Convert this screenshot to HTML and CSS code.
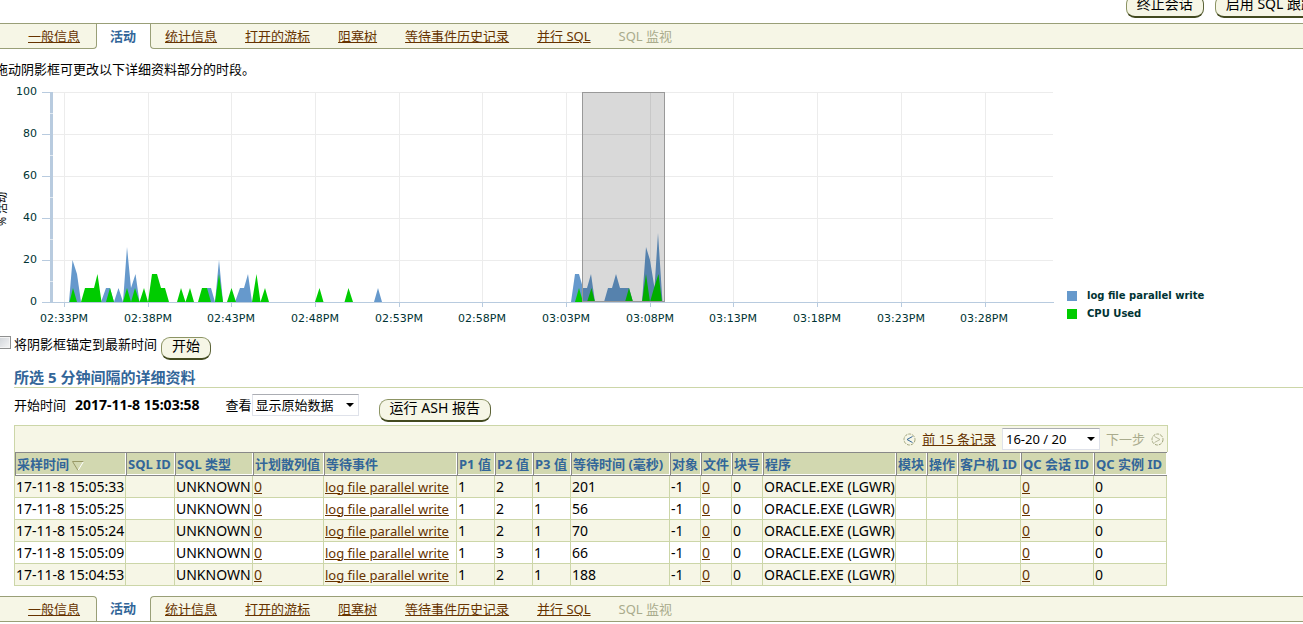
FILE: index.html
```
<!DOCTYPE html>
<html lang="zh-CN">
<head>
  <meta charset="UTF-8" />
  <meta name="viewport" content="width=device-width, initial-scale=1.0"/>
  <title>会话详细资料</title>
  <link rel="stylesheet" href="styles.css">
</head>
<body>
  <div class="toolbar">
    <button class="btn">终止会话</button>
    <button class="btn">启用 SQL 跟踪</button>
  </div>

  <nav class="tabs tabs-top">
    <div class="tab-group before"><a href="#">一般信息</a></div>
    <span class="tab-active">活动</span>
    <div class="tab-group after">
      <a href="#">统计信息</a>
      <a href="#">打开的游标</a>
      <a href="#">阻塞树</a>
      <a href="#">等待事件历史记录</a>
      <a href="#">并行 SQL</a>
      <span class="disabled">SQL 监视</span>
    </div>
  </nav>

  <p class="hint">拖动阴影框可更改以下详细资料部分的时段。</p>

  <div class="chart-row">
    <svg class="chart" width="1056" height="244" viewBox="0 84 1056 244">
      <!-- grid -->
      <path class="grid" d="M53 92.5H1053M53 134.5H1053M53 176.5H1053M53 218.5H1053M53 260.5H1053M64.5 92V302M148.5 92V302M231.5 92V302M315.5 92V302M399.5 92V302M482.5 92V302M566.5 92V302M650.5 92V302M733.5 92V302M817.5 92V302M901.5 92V302M985.5 92V302"/>
      <!-- log file parallel write -->
      <path class="area-log" d="M69 302L72.500 260L77 274L81 302ZM101 302L106 288H110L114 302L118.500 288L123 302L127 247L131 288L135.500 274L139.500 302ZM203 302L207 288H211L215 302L219 260L223 302ZM235 302L240 288H244L248 274L252 302ZM374 302L378 288L382 302ZM571 302L575 274H579L583 288H587L591 274L595 302ZM604 302L608 288H612L616 274L620 288H629L633 302ZM642 302L646 247L650 260L654.500 288L658 233L662.500 302Z"/>
      <!-- CPU used -->
      <path class="area-cpu" d="M69.500 302L73 288L77 302ZM81 302L85 288H94L97.500 274L101.500 302ZM106 302L110 288L114 302ZM123 302L127 288L131 302L135 288L139.500 302L144 288L148 302L152 274H157L161 288H165L169 302ZM177 302L181 288L185.500 302L190 288L194 302ZM198 302L202 288H207L211 302ZM215 302L219 274L223 302ZM227 302L231.500 288L236 302ZM252 302L256.500 274L260.500 302L265 288L269 302ZM315 302L319.500 288L323.500 302ZM344.500 302L348.500 288L353 302ZM575 302L579 288L583 302ZM587 302L591.500 288L595 302ZM625 302L629 288L633 302ZM642 302L646 274L650 302L654 288L658.500 274L662 302Z"/>
      <rect class="shade" x="582.500" y="92.500" width="82" height="209"/>
      <!-- axes -->
      <path class="axis" d="M42 92.500H50M42 134.500H50M42 176.500H50M42 218.500H50M42 260.500H50M42 302.500H1054M64.500 302V307M148.500 302V307M231.500 302V307M315.500 302V307M399.500 302V307M482.500 302V307M566.500 302V307M650.500 302V307M733.500 302V307M817.500 302V307M901.500 302V307M985.500 302V307"/>
      <path class="axis-bar" d="M51.500 92V303"/>
      <path class="axis-gap" d="M50 113.500H53M50 155.500H53M50 197.500H53M50 239.500H53M50 281.500H53"/>
      <g class="y-labels">
        <text x="37" y="95">100</text>
        <text x="37" y="137">80</text>
        <text x="37" y="179">60</text>
        <text x="37" y="221">40</text>
        <text x="37" y="263">20</text>
        <text x="37" y="305">0</text>
      </g>
      <g class="x-labels">
        <text x="64" y="322">02:33PM</text>
        <text x="148" y="322">02:38PM</text>
        <text x="231" y="322">02:43PM</text>
        <text x="315" y="322">02:48PM</text>
        <text x="399" y="322">02:53PM</text>
        <text x="482" y="322">02:58PM</text>
        <text x="566" y="322">03:03PM</text>
        <text x="650" y="322">03:08PM</text>
        <text x="733" y="322">03:13PM</text>
        <text x="817" y="322">03:18PM</text>
        <text x="901" y="322">03:23PM</text>
        <text x="984" y="322">03:28PM</text>
      </g>
      <text class="y-title" transform="translate(6 209) rotate(-90)">% 活动</text>
    </svg>
    <ul class="legend">
      <li><i class="swatch log"></i>log file parallel write</li>
      <li><i class="swatch cpu"></i>CPU Used</li>
    </ul>
  </div>

  <div class="anchor-row">
    <input type="checkbox" id="anchor">
    <label for="anchor">将阴影框锚定到最新时间</label>
    <button class="btn">开始</button>
  </div>

  <div class="details">
    <h2>所选 5 分钟间隔的详细资料</h2>
    <div class="filter-row">
      <span>开始时间</span>
      <strong>2017-11-8 15:03:58</strong>
      <label for="view">查看</label>
      <select id="view" class="view-select"><option>显示原始数据</option></select>
      <button class="btn">运行 ASH 报告</button>
    </div>

    <div class="table-wrap">
      <div class="pager">
        <svg width="13" height="13" viewBox="0 0 13 13"><circle class="ring" cx="6.500" cy="6.500" r="5.500"/><path class="arrow" d="M9.500 3.500L4 6.500L9.500 9.500"/></svg>
        <a href="#">前 15 条记录</a>
        <select class="page-select" aria-label="记录范围"><option>16-20 / 20</option></select>
        <span class="disabled">下一步</span>
        <svg width="13" height="13" viewBox="0 0 13 13"><circle class="ring" cx="6.500" cy="6.500" r="5.500"/><path class="arrow off" d="M3.500 3.500L9 6.500L3.500 9.500"/></svg>
      </div>
      <table class="samples">
        <colgroup>
          <col class="c-time"><col class="c-sqlid"><col class="c-type"><col class="c-hash"><col class="c-event">
          <col class="c-p"><col class="c-p"><col class="c-p"><col class="c-wait"><col class="c-s"><col class="c-s"><col class="c-s">
          <col class="c-prog"><col class="c-s"><col class="c-s"><col class="c-client"><col class="c-qc"><col class="c-qc">
        </colgroup>
        <thead>
          <tr>
            <th>采样时间<svg class="sort" width="12" height="10" viewBox="0 0 12 10"><path d="M11.500 .5L6 9.500" stroke="#fff"/><path d="M6 9.500L.5 .5H11.500" stroke="#999966"/></svg></th>
            <th>SQL ID</th><th>SQL 类型</th><th>计划散列值</th><th>等待事件</th>
            <th>P1 值</th><th>P2 值</th><th>P3 值</th><th>等待时间 (毫秒)</th><th>对象</th><th>文件</th><th>块号</th>
            <th>程序</th><th>模块</th><th>操作</th><th>客户机 ID</th><th>QC 会话 ID</th><th>QC 实例 ID</th>
          </tr>
        </thead>
        <tbody>
          <tr>
            <td>17-11-8 15:05:33</td><td></td><td>UNKNOWN</td><td><a href="#">0</a></td><td class="event"><a href="#">log file parallel write</a></td>
            <td>1</td><td>2</td><td>1</td><td>201</td><td>-1</td><td><a href="#">0</a></td><td>0</td>
            <td>ORACLE.EXE (LGWR)</td><td></td><td></td><td></td><td><a href="#">0</a></td><td>0</td>
          </tr>
          <tr>
            <td>17-11-8 15:05:25</td><td></td><td>UNKNOWN</td><td><a href="#">0</a></td><td class="event"><a href="#">log file parallel write</a></td>
            <td>1</td><td>2</td><td>1</td><td>56</td><td>-1</td><td><a href="#">0</a></td><td>0</td>
            <td>ORACLE.EXE (LGWR)</td><td></td><td></td><td></td><td><a href="#">0</a></td><td>0</td>
          </tr>
          <tr>
            <td>17-11-8 15:05:24</td><td></td><td>UNKNOWN</td><td><a href="#">0</a></td><td class="event"><a href="#">log file parallel write</a></td>
            <td>1</td><td>2</td><td>1</td><td>70</td><td>-1</td><td><a href="#">0</a></td><td>0</td>
            <td>ORACLE.EXE (LGWR)</td><td></td><td></td><td></td><td><a href="#">0</a></td><td>0</td>
          </tr>
          <tr>
            <td>17-11-8 15:05:09</td><td></td><td>UNKNOWN</td><td><a href="#">0</a></td><td class="event"><a href="#">log file parallel write</a></td>
            <td>1</td><td>3</td><td>1</td><td>66</td><td>-1</td><td><a href="#">0</a></td><td>0</td>
            <td>ORACLE.EXE (LGWR)</td><td></td><td></td><td></td><td><a href="#">0</a></td><td>0</td>
          </tr>
          <tr>
            <td>17-11-8 15:04:53</td><td></td><td>UNKNOWN</td><td><a href="#">0</a></td><td class="event"><a href="#">log file parallel write</a></td>
            <td>1</td><td>2</td><td>1</td><td>188</td><td>-1</td><td><a href="#">0</a></td><td>0</td>
            <td>ORACLE.EXE (LGWR)</td><td></td><td></td><td></td><td><a href="#">0</a></td><td>0</td>
          </tr>
        </tbody>
      </table>
    </div>
  </div>

  <nav class="tabs tabs-bottom">
    <div class="tab-group before"><a href="#">一般信息</a></div>
    <span class="tab-active">活动</span>
    <div class="tab-group after">
      <a href="#">统计信息</a>
      <a href="#">打开的游标</a>
      <a href="#">阻塞树</a>
      <a href="#">等待事件历史记录</a>
      <a href="#">并行 SQL</a>
      <span class="disabled">SQL 监视</span>
    </div>
  </nav>
</body>
</html>
```
FILE: styles.css
```
* {
  box-sizing: border-box;
}

body {
  margin: 0;
  overflow-x: hidden;
  background: #fff;
  color: #000;
  font-family: "Noto Sans", "Noto Sans CJK SC", sans-serif;
  font-size: 13px;
  line-height: 18px;
}

a {
  color: #663300;
}

.disabled {
  color: #a9ab8c;
}

.btn {
  height: 23px;
  padding: 0 10px 4px;
  border: 1px solid #8c9464;
  border-right-color: #5d6438;
  border-bottom: 2px solid #434a20;
  border-radius: 9px;
  background: #f6f6e6;
  color: #000;
  font-family: inherit;
  font-size: 14px;
  line-height: 16px;
  white-space: nowrap;
}

.toolbar {
  display: flex;
  justify-content: flex-end;
  align-items: flex-end;
  gap: 11px;
  height: 23px;
  padding-bottom: 5px;
  margin-right: -23px;
}

/* tab bars */
.tabs {
  display: flex;
  height: 26px;
  line-height: 24px;
  white-space: nowrap;
}

.tab-group {
  display: flex;
  gap: 28px;
  border: 0 solid #999f77;
  background: #f6f6e6;
}

.before {
  padding: 0 16px 0 28px;
  border-right-width: 1px;
}

.after {
  flex: 1;
  padding-left: 14px;
  border-left-width: 1px;
}

.tab-active {
  padding: 0 14px 0 13px;
  color: #336699;
  font-weight: bold;
}

.tabs-top {
  border-top: 1px solid #999f77;
}

.tabs-top .tab-group {
  border-bottom-width: 1px;
}

.tabs-top .before {
  border-bottom-right-radius: 4px;
}

.tabs-top .after {
  border-bottom-left-radius: 4px;
}

.tabs-bottom {
  margin-top: 10px;
  border-bottom: 1px solid #999f77;
}

.tabs-bottom .tab-group {
  border-top-width: 1px;
}

.tabs-bottom .before {
  border-top-right-radius: 4px;
}

.tabs-bottom .after {
  border-top-left-radius: 4px;
}

.hint {
  margin: 11px 0 6px -5px;
}

/* activity chart */
.chart-row {
  display: flex;
  align-items: flex-end;
}

.chart {
  flex: none;
}

.chart path {
  fill: none;
}

.chart .grid {
  stroke: #ececec;
}

.chart .axis {
  stroke: #b8cbdf;
}

.chart .axis-bar {
  stroke: #b8cbdf;
  stroke-width: 3;
}

.chart .axis-gap {
  stroke: #e2eaf2;
}

.chart .area-log {
  fill: #6699cc;
}

.chart .area-cpu {
  fill: #00cc00;
}

.shade {
  fill: rgba(0, 0, 0, 0.15);
  stroke: #999;
}

.y-labels,
.x-labels {
  fill: #003333;
  font-family: "DejaVu Sans", sans-serif;
  font-size: 11px;
}

.y-labels {
  text-anchor: end;
}

.x-labels,
.y-title {
  text-anchor: middle;
}

.y-title {
  font-size: 11px;
}

.legend {
  margin: 0 0 5px 11px;
  padding: 0;
  list-style: none;
  color: #003333;
  font-family: "DejaVu Sans", sans-serif;
  font-size: 10px;
  font-weight: bold;
  white-space: nowrap;
}

.legend li {
  display: flex;
  align-items: center;
  gap: 10px;
}

.swatch {
  width: 10px;
  height: 10px;
}

.swatch.log {
  background: #6699cc;
}

.swatch.cpu {
  background: #00cc00;
}

.anchor-row {
  display: flex;
  align-items: flex-start;
  padding-top: 7px;
}

.anchor-row input {
  appearance: none;
  width: 13px;
  height: 13px;
  margin: 1px 3px 0 -2px;
  border: 1px solid #8e8f8f;
  background: linear-gradient(135deg, #cfd3d8, #f6f6f6);
  box-shadow: inset 0 0 0 1px #f4f4f4;
}

.anchor-row .btn {
  margin: 2px 0 0 4px;
}

/* details */
.details {
  padding-left: 14px;
}

h2 {
  margin: 8px 0 0;
  border-bottom: 1px solid #ccd6a8;
  color: #336699;
  font-size: 15px;
  line-height: 19px;
}

.filter-row {
  display: flex;
  align-items: center;
  height: 34px;
  white-space: nowrap;
}

.filter-row strong {
  margin: 0 26px 0 9px;
  font-size: 14px;
}

.filter-row .btn {
  margin: 10px 0 0 20px;
}

select {
  height: 22px;
  padding: 0 3px;
  border: 1px solid #dfe2ea;
  border-top-color: #abadb3;
  border-radius: 0;
  appearance: none;
  background: #fff url("data:image/svg+xml,%3Csvg xmlns='http://www.w3.org/2000/svg' width='8' height='4'%3E%3Cpath d='M0 0h8L4 4z'/%3E%3C/svg%3E") no-repeat right 4px center;
  color: #000;
  font-family: inherit;
  font-size: 13px;
}

.view-select {
  width: 107px;
}

.page-select {
  width: 98px;
}

.table-wrap {
  width: 1154px;
  margin-top: 3px;
}

.pager {
  display: flex;
  align-items: center;
  justify-content: flex-end;
  gap: 6px;
  height: 27px;
  padding-right: 3px;
  border: 1px solid #ccd6a8;
  border-bottom: 0;
  background: #f6f6e6;
}

.pager svg {
  fill: none;
}

.ring {
  stroke: #a0a47c;
  stroke-dasharray: 3 1;
}

.arrow {
  stroke: #336699;
}

.arrow.off {
  stroke: #b9bba0;
}

.samples {
  width: 1153px;
  table-layout: fixed;
  border-collapse: separate;
  border-spacing: 0;
  border-left: 1px solid #ccd6a8;
  white-space: nowrap;
}

.samples th {
  height: 24px;
  padding: 0 1px;
  border: solid #888;
  border-width: 1px 0 1px 1px;
  background: #d2d8b0;
  box-shadow: inset -1px -1px #fff;
  color: #336699;
  text-align: left;
}

.samples td {
  height: 22px;
  padding: 0 1px;
  border-right: 1px solid #ccd6a8;
  border-bottom: 1px solid #ccd6a8;
  font-size: 14px;
  line-height: 20px;
}

.samples .event {
  font-size: 13px;
}

.samples tbody tr:nth-child(odd) {
  background: #f6f6e6;
}

.sort {
  margin-left: 3px;
  vertical-align: -2px;
  fill: none;
}

.c-time { width: 111px; }
.c-sqlid { width: 49px; }
.c-type { width: 78px; }
.c-hash { width: 71px; }
.c-event { width: 133px; }
.c-p { width: 38px; }
.c-wait { width: 99px; }
.c-s { width: 31px; }
.c-prog { width: 133px; }
.c-client { width: 63px; }
.c-qc { width: 73px; }
```
